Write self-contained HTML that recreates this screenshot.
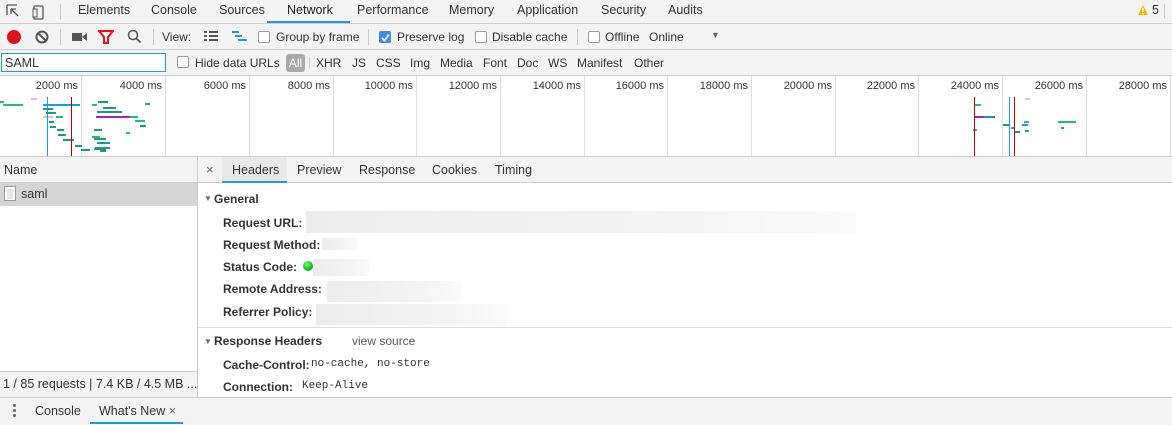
<!DOCTYPE html>
<html><head><meta charset="utf-8"><style>
*{box-sizing:border-box;margin:0;padding:0}
body{width:1172px;height:425px;overflow:hidden;background:#fff;font-family:"Liberation Sans",sans-serif;font-size:12px;color:#333;position:relative}
.a{position:absolute;white-space:nowrap}
.bar{position:absolute;height:2px}
.cb{position:absolute;width:12px;height:12px;border:1px solid #999;border-radius:2px;background:#fff}
.blur{position:absolute;background:linear-gradient(90deg,#ececec,#f4f4f4 70%,#fafafa);}
.lbl{position:absolute;font-weight:bold;color:#333}
</style></head><body>
<div class="a" style="left:0;top:0;width:1172px;height:24px;background:#f3f3f3;border-bottom:1px solid #ccc"></div>
<svg class="a" style="left:5px;top:3px" width="50" height="18"><path d="M2 2h10M2 2v10M6 6l7 7M6 6h5M6 6v5" stroke="#555" stroke-width="1.3" fill="none"/><rect x="29" y="3" width="9" height="13" rx="1" stroke="#555" fill="none" stroke-width="1.3"/><rect x="28" y="6" width="4" height="8" fill="#f3f3f3" stroke="#555" stroke-width="1"/></svg>
<div class="a" style="left:60px;top:4px;width:1px;height:16px;background:#ccc"></div>
<div class="a" style="left:78px;top:3px;font-size:12.5px">Elements</div>
<div class="a" style="left:151px;top:3px;font-size:12.5px">Console</div>
<div class="a" style="left:219px;top:3px;font-size:12.5px">Sources</div>
<div class="a" style="left:287px;top:3px;font-size:12.5px;color:#222">Network</div>
<div class="a" style="left:267px;top:21px;width:83px;height:2px;background:#1a9ae0"></div>
<div class="a" style="left:357px;top:3px;font-size:12.5px">Performance</div>
<div class="a" style="left:449px;top:3px;font-size:12.5px">Memory</div>
<div class="a" style="left:517px;top:3px;font-size:12.5px">Application</div>
<div class="a" style="left:601px;top:3px;font-size:12.5px">Security</div>
<div class="a" style="left:668px;top:3px;font-size:12.5px">Audits</div>
<svg class="a" style="left:1137px;top:4px" width="12" height="12"><path d="M6 1L11 11H1Z" fill="#f4b400"/><rect x="5.3" y="4" width="1.4" height="4" fill="#fff"/><rect x="5.3" y="9" width="1.4" height="1.3" fill="#fff"/></svg>
<div class="a" style="left:1152px;top:3px;font-size:12.5px">5</div>
<div class="a" style="left:1164px;top:4px;width:1px;height:14px;background:#ccc"></div>
<div class="a" style="left:0;top:24px;width:1172px;height:26px;background:#f3f3f3;border-bottom:1px solid #ccc"></div>
<div class="a" style="left:7px;top:30px;width:14px;height:14px;border-radius:50%;background:#e0111b"></div>
<svg class="a" style="left:35px;top:30px" width="14" height="14"><circle cx="7" cy="7" r="5.5" stroke="#555" stroke-width="2" fill="none"/><path d="M3 3l8 8" stroke="#555" stroke-width="2"/></svg>
<div class="a" style="left:60px;top:29px;width:1px;height:16px;background:#ccc"></div>
<svg class="a" style="left:72px;top:32px" width="16" height="10"><rect x="0" y="1" width="10" height="8" fill="#555"/><path d="M10 5l5-4v8z" fill="#555"/></svg>
<svg class="a" style="left:98px;top:30px" width="16" height="14"><path d="M1 1h14l-5 6v6h-4v-6z" fill="none" stroke="#e0111b" stroke-width="2"/></svg>
<svg class="a" style="left:127px;top:29px" width="15" height="15"><circle cx="6" cy="6" r="4.5" stroke="#555" stroke-width="1.5" fill="none"/><path d="M9.5 9.5l4 4" stroke="#555" stroke-width="1.7"/></svg>
<div class="a" style="left:153px;top:29px;width:1px;height:16px;background:#ccc"></div>
<div class="a" style="left:162px;top:30px">View:</div>
<svg class="a" style="left:204px;top:31px" width="14" height="11"><path d="M0 1h3M5 1h9M0 5h3M5 5h9M0 9h3M5 9h9" stroke="#555" stroke-width="2"/></svg>
<svg class="a" style="left:232px;top:31px" width="15" height="11"><path d="M0 1h7M3 5h7M6 9h9" stroke="#1a9ae0" stroke-width="2"/></svg>
<div class="cb" style="left:258px;top:31px"></div>
<div class="a" style="left:276px;top:30px">Group by frame</div>
<div class="a" style="left:368px;top:29px;width:1px;height:16px;background:#ccc"></div>
<div class="cb" style="left:379px;top:31px;background:#3b8ee8;border-color:#3b8ee8"></div>
<svg class="a" style="left:381px;top:33px" width="9" height="9"><path d="M1 5l2.5 2.5L8 1.5" stroke="#fff" stroke-width="1.6" fill="none"/></svg>
<div class="a" style="left:397px;top:30px">Preserve log</div>
<div class="cb" style="left:475px;top:31px"></div>
<div class="a" style="left:492px;top:30px">Disable cache</div>
<div class="a" style="left:577px;top:29px;width:1px;height:16px;background:#ccc"></div>
<div class="cb" style="left:588px;top:31px"></div>
<div class="a" style="left:605px;top:30px">Offline</div>
<div class="a" style="left:649px;top:30px">Online</div>
<div class="a" style="left:711px;top:30px;font-size:9px;color:#666">▼</div>
<div class="a" style="left:0;top:50px;width:1172px;height:26px;background:#f3f3f3;border-bottom:1px solid #ccc"></div>
<div class="a" style="left:1px;top:53px;width:165px;height:19px;background:#fff;border:1px solid #1a9ae0;padding:2px 3px;font-size:12.5px">SAML</div>
<div class="cb" style="left:177px;top:56px"></div>
<div class="a" style="left:195px;top:56px">Hide data URLs</div>
<div class="a" style="left:286px;top:54px;width:19px;height:18px;background:#aaa;border-radius:3px;color:#fff;text-align:center;line-height:18px">All</div>
<div class="a" style="left:309px;top:57px;width:1px;height:12px;background:#ccc"></div>
<div class="a" style="left:316px;top:56px">XHR</div>
<div class="a" style="left:352px;top:56px">JS</div>
<div class="a" style="left:376px;top:56px">CSS</div>
<div class="a" style="left:410px;top:56px">Img</div>
<div class="a" style="left:440px;top:56px">Media</div>
<div class="a" style="left:483px;top:56px">Font</div>
<div class="a" style="left:517px;top:56px">Doc</div>
<div class="a" style="left:548px;top:56px">WS</div>
<div class="a" style="left:577px;top:56px">Manifest</div>
<div class="a" style="left:634px;top:56px">Other</div>
<div class="a" style="left:0;top:156px;width:1172px;height:1px;background:#ccc"></div>
<div id="ov"></div>
<div class="a" style="left:0;top:157px;width:198px;height:26px;background:#f3f3f3;border-bottom:1px solid #ccc"></div>
<div class="a" style="left:4px;top:163px;font-size:12.5px">Name</div>
<div class="a" style="left:0;top:183px;width:197px;height:23px;background:#d5d5d5"></div>
<svg class="a" style="left:4px;top:186px" width="12" height="15"><rect x="0.5" y="0.5" width="11" height="14" fill="#fff" stroke="#999"/><path d="M3 4h6M3 6h6M3 8h6M3 10h6M3 12h6" stroke="#ccc"/></svg>
<div class="a" style="left:21px;top:187px;font-size:12.5px">saml</div>
<div class="a" style="left:0;top:371px;width:198px;height:1px;background:#ccc"></div>
<div class="a" style="left:0;top:372px;width:198px;height:25px;background:#f3f3f3"></div>
<div class="a" style="left:3px;top:377px;font-size:12.5px">1 / 85 requests | 7.4 KB / 4.5 MB ...</div>
<div class="a" style="left:197px;top:157px;width:1px;height:240px;background:#ccc"></div>
<div class="a" style="left:198px;top:157px;width:974px;height:26px;background:#f3f3f3;border-bottom:1px solid #ccc"></div>
<div class="a" style="left:206px;top:162px;font-size:13px;color:#666">×</div>
<div class="a" style="left:222px;top:157px;width:65px;height:26px;background:#e8e8e8;border-bottom:2px solid #1a9ae0"></div>
<div class="a" style="left:232px;top:163px;font-size:12.5px">Headers</div>
<div class="a" style="left:297px;top:163px;font-size:12.5px">Preview</div>
<div class="a" style="left:359px;top:163px;font-size:12.5px">Response</div>
<div class="a" style="left:432px;top:163px;font-size:12.5px">Cookies</div>
<div class="a" style="left:495px;top:163px;font-size:12.5px">Timing</div>
<div class="a" style="left:204px;top:194px;font-size:8px;color:#666">▼</div>
<div class="lbl" style="left:214px;top:192px">General</div>
<div class="lbl" style="left:223px;top:216px">Request URL:</div>
<div class="blur" style="left:306px;top:211px;width:550px;height:22px"></div>
<div class="lbl" style="left:223px;top:238px">Request Method:</div>
<div class="blur" style="left:322px;top:238px;width:36px;height:12px"></div>
<div class="lbl" style="left:223px;top:260px">Status Code:</div>
<div class="a" style="left:303px;top:261px;width:10px;height:10px;border-radius:50%;background:radial-gradient(circle at 40% 35%,#6f6,#1a1 70%)"></div>
<div class="blur" style="left:313px;top:259px;width:56px;height:17px"></div>
<div class="lbl" style="left:223px;top:282px">Remote Address:</div>
<div class="blur" style="left:327px;top:281px;width:135px;height:21px"></div>
<div class="lbl" style="left:223px;top:305px">Referrer Policy:</div>
<div class="blur" style="left:316px;top:304px;width:191px;height:21px"></div>
<div class="a" style="left:198px;top:327px;width:974px;height:1px;background:#ddd"></div>
<div class="a" style="left:204px;top:337px;font-size:8px;color:#666">▼</div>
<div class="lbl" style="left:214px;top:334px">Response Headers</div>
<div class="a" style="left:352px;top:334px;color:#555">view source</div>
<div class="lbl" style="left:223px;top:358px">Cache-Control:</div>
<div class="a" style="left:311px;top:358px;font-family:'Liberation Mono',monospace;font-size:11px">no-cache, no-store</div>
<div class="lbl" style="left:223px;top:380px">Connection:</div>
<div class="a" style="left:302px;top:380px;font-family:'Liberation Mono',monospace;font-size:11px">Keep-Alive</div>
<div class="a" style="left:0;top:397px;width:1172px;height:28px;background:#f3f3f3;border-top:1px solid #ccc"></div>
<div class="a" style="left:13px;top:404px;width:3px;height:3px;background:#666;border-radius:50%;box-shadow:0 5px 0 #666,0 10px 0 #666"></div>
<div class="a" style="left:35px;top:404px;font-size:12.5px">Console</div>
<div class="a" style="left:99px;top:404px;font-size:12.5px">What's New <span style="color:#666">×</span></div>
<div class="a" style="left:90px;top:422px;width:93px;height:2px;background:#1a9ae0"></div>
<script>
var h='';
var xs=[81,165,249,333,416,500,584,667,751,835,918,1002,1086,1170];
xs.forEach(function(x,i){h+='<div class="a" style="left:'+x+'px;top:76px;width:1px;height:80px;background:#ddd"></div>';
h+='<div class="a" style="left:'+(x-80)+'px;top:80px;width:77px;text-align:right;font-size:11px">'+((i+1)*2000)+' ms</div>';});
var G='#1bc46a',T='#1a9a8a',P='#9b27b0',B='#1a9ae0',Y='#ccc';
var bars=[[0,101,4,G],[3,104,20,G],[31,98,6,Y],[43,104,37,B],[43,108,10,T],[46,112,10,T],[43,116,10,Y],[56,116,7,G],[49,121,5,T],[50,126,6,T],[57,129,7,T],[58,134,8,T],[63,139,11,T],[75,145,7,T],[81,149,9,T],[98,101,10,T],[103,107,13,T],[97,111,25,T],[92,104,5,G],[96,116,40,P],[130,116,8,G],[135,120,10,G],[140,125,6,T],[145,103,5,T],[94,148,12,T],[94,129,8,T],[92,136,8,G],[94,138,12,T],[97,142,13,T],[126,132,4,G],[95,147,15,T],[100,150,6,T],[104,142,6,T],[975,104,6,G],[975,116,20,P],[984,116,10,T],[973,129,4,G],[1003,124,6,T],[1011,127,4,B],[1015,131,5,T],[1025,98,5,Y],[1024,121,5,G],[1022,124,6,B],[1025,130,4,B],[1058,121,18,G],[1061,127,3,B]];
bars.forEach(function(b){h+='<div class="bar" style="left:'+b[0]+'px;top:'+b[1]+'px;width:'+b[2]+'px;background:'+b[3]+'"></div>';});
[[47,B],[71,'#b00'],[974,'#c00'],[1009,B],[1014,'#c00']].forEach(function(l){h+='<div class="a" style="left:'+l[0]+'px;top:97px;width:1px;height:59px;background:'+l[1]+'"></div>';});
document.getElementById('ov').innerHTML=h;
</script>
</body></html>
